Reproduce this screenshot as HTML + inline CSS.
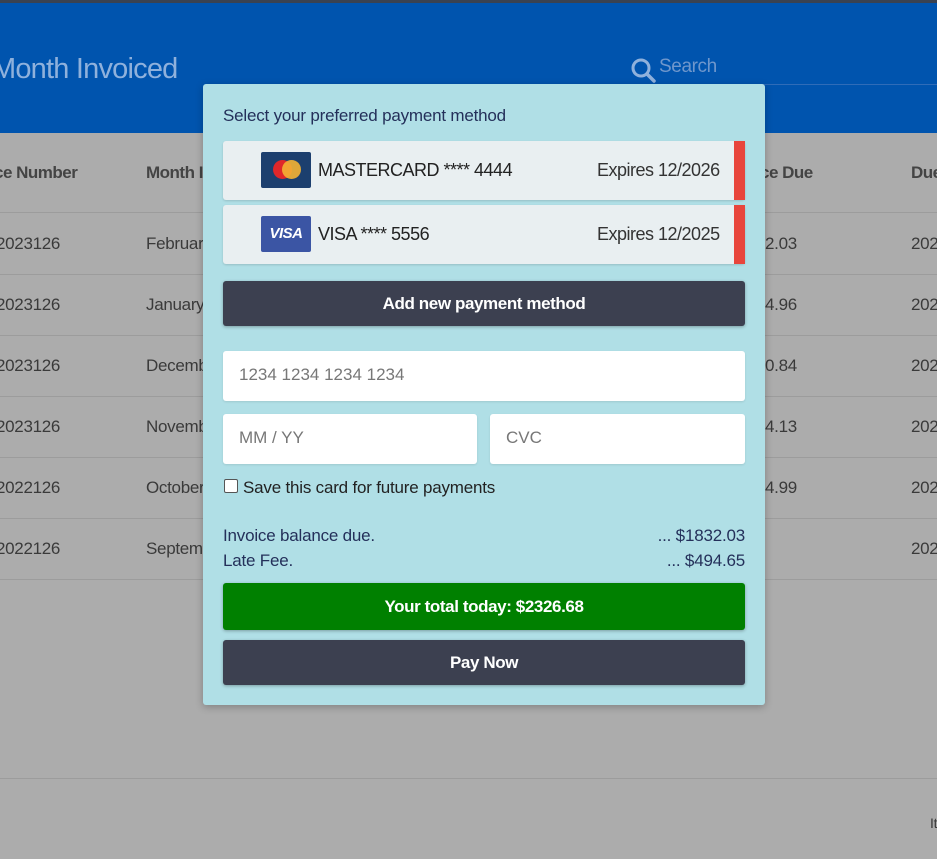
<!DOCTYPE html>
<html><head><style>
*{box-sizing:border-box;margin:0;padding:0}
body{width:937px;height:859px;overflow:hidden;background:#acacac;font-family:"Liberation Sans",Arial,sans-serif;position:relative}
.a{position:absolute}
.hdr{left:0;top:0;width:937px;height:133px;background:#0054ae;border-top:3px solid #3a4250}
.t{color:#3a3a3a;font-size:17px;letter-spacing:-0.3px}
.th{color:#444;font-size:17px;font-weight:bold;letter-spacing:-0.5px}
.ln{left:0;width:937px;height:1px;background:#9c9c9c}
.modal{left:203px;top:84px;width:562px;height:621px;background:#b0dfe6;border-radius:3px;box-shadow:0 2px 8px rgba(0,0,0,.25)}
.card{left:20px;width:522px;height:59px;background:#e9eff1;border-radius:3px;box-shadow:0 1px 2px rgba(0,0,0,.15)}
.red{right:0;top:0;width:11px;height:59px;background:#e8453c}
.btn{left:20px;width:522px;color:#fff;font-weight:bold;font-size:17px;text-align:center;border-radius:3px;box-shadow:0 1px 3px rgba(0,0,0,.3);letter-spacing:-0.4px}
.in{background:#fff;border-radius:3px;color:#777;font-size:17px;padding-left:16px;height:50px;line-height:48px;box-shadow:0 1px 2px rgba(0,0,0,.1)}
.dk{color:#24305a;font-size:17px;letter-spacing:-0.2px}
.ct{font-size:18px;letter-spacing:-0.5px}
</style></head><body>
<div class="a hdr"></div>
<div class="a" style="left:-8px;top:53px;color:#8fb1dc;font-size:29px;letter-spacing:-0.8px">Month Invoiced</div>
<svg class="a" style="left:630px;top:57px" width="28" height="28" viewBox="0 0 28 28"><circle cx="11" cy="11" r="8" fill="none" stroke="#8fb1dc" stroke-width="3"/><path d="M17 17l7 7" stroke="#8fb1dc" stroke-width="3.5" stroke-linecap="round"/></svg>
<div class="a" style="left:659px;top:56px;color:#6f97cc;font-size:19px;letter-spacing:-0.4px">Search</div>
<div class="a" style="left:659px;top:84px;width:278px;height:1px;background:#2f6cb8"></div>
<div class="a th" style="left:-6px;top:163px">ce Number</div>
<div class="a th" style="left:146px;top:163px">Month I</div>
<div class="a th" style="left:760px;top:163px">ce Due</div>
<div class="a th" style="left:911px;top:163px">Due</div>
<div class="a ln" style="top:212px"></div>
<div class="a ln" style="top:274px"></div>
<div class="a ln" style="top:335px"></div>
<div class="a ln" style="top:396px"></div>
<div class="a ln" style="top:457px"></div>
<div class="a ln" style="top:518px"></div>
<div class="a ln" style="top:579px"></div>
<div class="a ln" style="top:778px"></div>
<div class="a t" style="left:-4px;top:234px">2023126</div><div class="a t" style="left:146px;top:234px">Februar</div><div class="a t" style="left:765px;top:234px">2.03</div><div class="a t" style="left:911px;top:234px">202</div>
<div class="a t" style="left:-4px;top:295px">2023126</div><div class="a t" style="left:146px;top:295px">January</div><div class="a t" style="left:765px;top:295px">4.96</div><div class="a t" style="left:911px;top:295px">202</div>
<div class="a t" style="left:-4px;top:356px">2023126</div><div class="a t" style="left:146px;top:356px">Decemb</div><div class="a t" style="left:765px;top:356px">0.84</div><div class="a t" style="left:911px;top:356px">202</div>
<div class="a t" style="left:-4px;top:417px">2023126</div><div class="a t" style="left:146px;top:417px">Novemb</div><div class="a t" style="left:765px;top:417px">4.13</div><div class="a t" style="left:911px;top:417px">202</div>
<div class="a t" style="left:-4px;top:478px">2022126</div><div class="a t" style="left:146px;top:478px">October</div><div class="a t" style="left:765px;top:478px">4.99</div><div class="a t" style="left:911px;top:478px">202</div>
<div class="a t" style="left:-4px;top:539px">2022126</div><div class="a t" style="left:146px;top:539px">Septem</div><div class="a t" style="left:911px;top:539px">202</div>
<div class="a t" style="left:930px;top:815px;font-size:14px">It</div>

<div class="a modal">
<div class="a dk" style="left:20px;top:22px">Select your preferred payment method</div>
<div class="a card" style="top:57px">
 <div class="a" style="left:38px;top:11px;width:50px;height:36px;background:#1c3f6e;border-radius:2px"><div class="a" style="left:12px;top:8px;width:19px;height:19px;border-radius:50%;background:#e0272a"></div><div class="a" style="left:21px;top:8px;width:19px;height:19px;border-radius:50%;background:#f4b233;opacity:.9"></div></div>
 <div class="a ct" style="left:95px;top:19px;color:#222">MASTERCARD **** 4444</div>
 <div class="a ct" style="left:374px;top:19px;color:#333">Expires 12/2026</div>
 <div class="a red"></div>
</div>
<div class="a card" style="top:121px">
 <div class="a" style="left:38px;top:11px;width:50px;height:36px;background:#3b55a4;border-radius:2px;color:#fff;font-weight:bold;font-style:italic;font-size:15px;text-align:center;line-height:36px;letter-spacing:-0.5px">VISA</div>
 <div class="a ct" style="left:95px;top:19px;color:#222">VISA **** 5556</div>
 <div class="a ct" style="left:374px;top:19px;color:#333">Expires 12/2025</div>
 <div class="a red"></div>
</div>
<div class="a btn" style="top:197px;height:45px;line-height:45px;background:#3c4050">Add new payment method</div>
<div class="a in" style="left:20px;top:267px;width:522px">1234 1234 1234 1234</div>
<div class="a in" style="left:20px;top:330px;width:254px">MM / YY</div>
<div class="a in" style="left:287px;top:330px;width:255px">CVC</div>
<div class="a" style="left:21px;top:395px;width:14px;height:14px;background:#fff;border:1px solid #555;border-radius:2px"></div>
<div class="a" style="left:40px;top:394px;font-size:17px;color:#222;letter-spacing:-0.2px">Save this card for future payments</div>
<div class="a dk" style="left:20px;top:442px">Invoice balance due.</div>
<div class="a dk" style="right:20px;top:442px">... $1832.03</div>
<div class="a dk" style="left:20px;top:467px">Late Fee.</div>
<div class="a dk" style="right:20px;top:467px">... $494.65</div>
<div class="a btn" style="top:499px;height:47px;line-height:47px;background:#008000">Your total today: $2326.68</div>
<div class="a btn" style="top:556px;height:45px;line-height:45px;background:#3c4050">Pay Now</div>
</div>
</body></html>
